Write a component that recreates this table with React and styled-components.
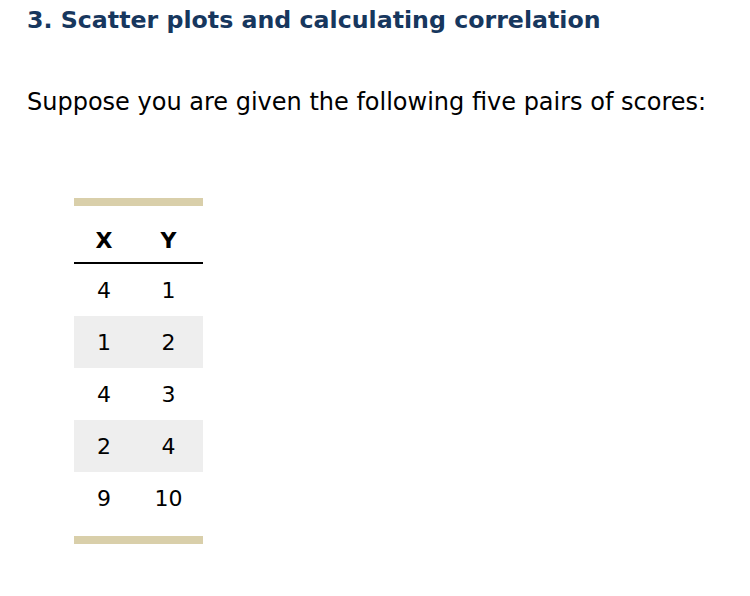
import React from "react";
import styled, { createGlobalStyle } from "styled-components";

const Global = createGlobalStyle`
  html, body { margin: 0; padding: 0; background: #fff; }
  body { font-family: "DejaVu Sans", Verdana, sans-serif; color: #000; }
`;

const Page = styled.div`
  padding: 6px 27px 0 27px;
`;

const Heading = styled.h3`
  margin: 0;
  font-size: 23.7px;
  font-weight: bold;
  color: #17375e;
  line-height: 28px;
`;

const Para = styled.p`
  margin: 54px 0 0 0;
  font-size: 24px;
  line-height: 28px;
`;

const TableWrap = styled.div`
  margin: 82px 0 0 47px;
  width: 129px;
`;

const Bar = styled.div`
  height: 8px;
  background: #d9cfaa;
`;

const Table = styled.table`
  width: 100%;
  border-collapse: collapse;
  table-layout: fixed;
  font-size: 22px;
`;

const Col = styled.col`
  width: ${(p) => p.$w};
`;

const Th = styled.th`
  height: 44px;
  font-weight: bold;
  text-align: center;
  border-bottom: 2px solid #000;
  padding: 12px 0 0 0;
  vertical-align: middle;
`;

const Tr = styled.tr`
  background: ${(p) => (p.$shaded ? "#eeeeee" : "#fff")};
`;

const Td = styled.td`
  height: 52px;
  text-align: center;
  padding: 0;
`;

const Foot = styled.div`
  height: 12px;
`;

const rows = [
  [4, 1],
  [1, 2],
  [4, 3],
  [2, 4],
  [9, 10],
];

export default function App() {
  return (
    <>
      <Global />
      <Page>
        <Heading>3. Scatter plots and calculating correlation</Heading>
        <Para>Suppose you are given the following five pairs of scores:</Para>
        <TableWrap>
          <Bar />
          <Table>
            <colgroup>
              <Col $w="60px" />
              <Col $w="auto" />
            </colgroup>
            <thead>
              <tr>
                <Th>X</Th>
                <Th>Y</Th>
              </tr>
            </thead>
            <tbody>
              {rows.map((r, i) => (
                <Tr key={i} $shaded={i % 2 === 1}>
                  <Td>{r[0]}</Td>
                  <Td>{r[1]}</Td>
                </Tr>
              ))}
            </tbody>
          </Table>
          <Foot />
          <Bar />
        </TableWrap>
      </Page>
    </>
  );
}
